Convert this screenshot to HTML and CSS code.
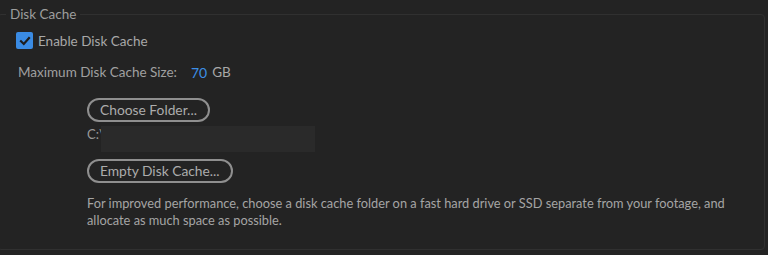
FILE: index.html
```html
<!DOCTYPE html>
<html>
<head>
<meta charset="utf-8">
<link rel="stylesheet" href="styles.css">
</head>
<body>
<fieldset class="group">
  <legend class="group-title">Disk Cache</legend>
  <label class="check-row">
    <span class="checkbox">
      <svg width="12" height="12" viewBox="0 0 12 12"><path d="M2 6.3 L4.8 9 L10 3" fill="none" stroke="#1d1d1d" stroke-width="2.2" stroke-linecap="square"/></svg>
    </span>
    <span class="check-label">Enable Disk Cache</span>
  </label>
  <div class="size-row">
    <span class="size-label">Maximum Disk Cache Size:</span>
    <span class="size-value">70</span>
    <span class="size-unit">GB</span>
  </div>
  <div class="indent">
    <button class="pill">Choose Folder...</button>
    <div class="path-row">
      <span class="path-text">C:\</span>
      <span class="path-mask"></span>
    </div>
    <button class="pill">Empty Disk Cache...</button>
    <p class="note">For improved performance, choose a disk cache folder on a fast hard drive or SSD separate from your footage, and allocate as much space as possible.</p>
  </div>
</fieldset>
</body>
</html>
```
FILE: styles.css
```css
html, body {
  margin: 0;
  padding: 0;
  background: #232323;
}
body {
  padding-top: 6px;
  height: 255px;
  box-sizing: border-box;
  overflow: hidden;
  font-family: Lato, "Liberation Sans", sans-serif;
  color: #a3a3a3;
}
.group {
  margin: 0 3px 0 -3px;
  padding: 9px 0 0 18px;
  border: 1px solid #303030;
  border-radius: 4px;
  height: 244px;
  box-sizing: border-box;
}
.group-title {
  padding: 0 4px;
  margin-left: -10px;
  font-size: 13.5px;
  line-height: 17px;
  color: #9d9d9d;
}
.check-row {
  display: flex;
  align-items: center;
  height: 17px;
  gap: 5px;
}
.checkbox {
  width: 17px;
  height: 17px;
  border-radius: 2px;
  background: #3a8be3;
  display: flex;
  align-items: center;
  justify-content: center;
}
.check-label {
  font-size: 13.5px;
  color: #a8a8a8;
}
.size-row {
  display: flex;
  align-items: center;
  height: 18px;
  margin-top: 14px;
  margin-left: 2px;
  font-size: 13.5px;
}
.size-label {
  color: #a0a0a0;
}
.size-value {
  color: #3c8fe6;
  margin-left: 14px;
  font-size: 14px;
}
.size-unit {
  margin-left: 5px;
  color: #a8a8a8;
}
.indent {
  margin-left: 71px;
  margin-top: 17px;
  display: flex;
  flex-direction: column;
  align-items: flex-start;
}
.pill {
  font-family: inherit;
  font-size: 13.8px;
  color: #acacac;
  background: transparent;
  border: 2px solid #8f8f8f;
  border-radius: 12px;
  height: 24px;
  padding: 0 11px;
  line-height: 18px;
}
.path-row {
  display: flex;
  align-items: flex-start;
  margin-top: 4px;
  height: 26px;
  margin-bottom: 7px;
}
.path-text {
  font-size: 13px;
  line-height: 14px;
  margin-top: 1px;
  color: #9a9a9a;
  width: 14px;
}
.path-mask {
  width: 214px;
  height: 26px;
  background: #2a2a2a;
}
.note {
  margin: 12px 0 0 0;
  font-size: 12.8px;
  line-height: 17px;
  color: #a5a5a5;
  max-width: 660px;
}
```
